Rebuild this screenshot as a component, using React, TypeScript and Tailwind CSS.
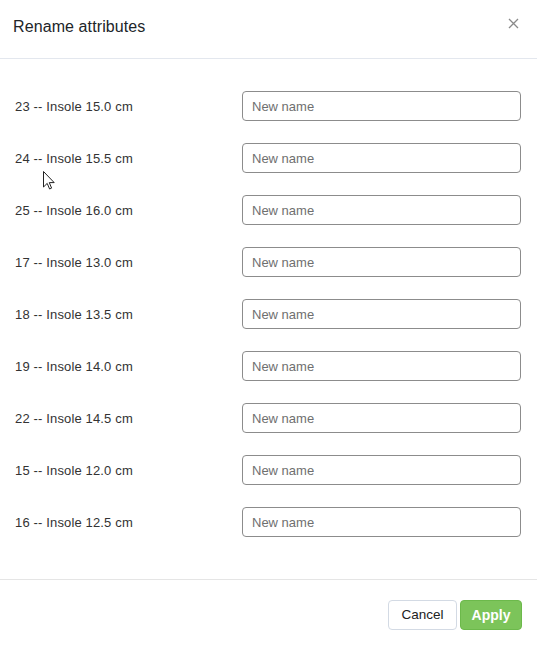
const ROWS = [
  "23 -- Insole 15.0 cm",
  "24 -- Insole 15.5 cm",
  "25 -- Insole 16.0 cm",
  "17 -- Insole 13.0 cm",
  "18 -- Insole 13.5 cm",
  "19 -- Insole 14.0 cm",
  "22 -- Insole 14.5 cm",
  "15 -- Insole 12.0 cm",
  "16 -- Insole 12.5 cm",
];

const App = () => {
  return (
    <div
      className="relative w-[537px] h-[645px] bg-white text-[#333] flex flex-col"
      style={{ fontFamily: '"Liberation Sans", Arial, sans-serif' }}
    >
      <div className="h-[59px] flex items-center justify-between pl-[13px] pr-[18px] border-b border-[#e3e7ee] shrink-0">
        <p className="text-[16px] text-[#212529] pb-[4px] tracking-[0.1px]">Rename attributes</p>
        <button className="text-[#8a8a8a] pb-[12px]">
          <svg width="11" height="11" viewBox="0 0 11 11">
            <path d="M1 1 L10 10 M10 1 L1 10" stroke="currentColor" strokeWidth="1.3" />
          </svg>
        </button>
      </div>

      <div className="flex flex-col gap-[22px] pt-[32px] pb-[42px] border-b border-[#e5e5e5]">
        {ROWS.map((row, index) => (
          <div key={index} className="flex items-center h-[30px]">
            <p className="w-[242px] pl-[15px] pt-[2px] text-[13px] tracking-[0.15px] text-[#333]">{row}</p>
            <input
              placeholder="New name"
              className="w-[279px] h-[30px] px-[9px] text-[13px] border border-[#8c8c8c] rounded-[4px] outline-none placeholder:text-[#6f6f6f]"
            />
          </div>
        ))}
      </div>

      <div className="flex justify-end gap-[3px] pt-[20px] pr-[15px]">
        <button className="w-[69px] h-[30px] bg-white border border-[#d3dae4] rounded-[4px] text-[13.5px] text-[#222]">
          Cancel
        </button>
        <button className="w-[62px] h-[30px] bg-[#7cc45a] border border-[#6cb94b] rounded-[4px] text-[14px] font-bold text-white">
          Apply
        </button>
      </div>

      <svg className="absolute left-[43px] top-[171px]" width="12" height="19" viewBox="0 0 12 19">
        <path d="M0.5 0.5 L0.5 16 L4.2 12.4 L6.6 18 L8.6 17.1 L6.3 11.6 L11.2 11.6 Z" fill="white" stroke="#222" strokeWidth="1" />
      </svg>
    </div>
  );
};

export default App;
